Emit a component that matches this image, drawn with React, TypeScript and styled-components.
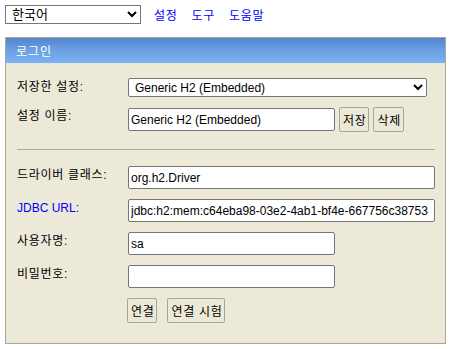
import React from 'react';
import styled, { createGlobalStyle } from 'styled-components';

const GlobalStyle = createGlobalStyle`
    body {
        margin: 0;
        background: #ffffff;
        font-family: "Liberation Sans", Arial, "Noto Sans CJK KR", sans-serif;
        font-size: 12px;
        color: #000000;
    }
`;

const Page = styled.div`
    padding: 5px;
`;

const TopBar = styled.div`
    display: flex;
    align-items: center;
    height: 19px;
`;

const LanguageSelect = styled.select`
    width: 136px;
    height: 19px;
    font-family: "Liberation Sans", Arial, "Noto Sans CJK KR", sans-serif;
    font-size: 13px;
    border: 1px solid #767676;
    border-radius: 0;
    background: #ffffff;
    padding: 0 2px;
    margin: 0 -1px 0 0;
`;

const NavLink = styled.a`
    color: #0000ff;
    text-decoration: none;
    font-size: 12px;
    letter-spacing: 0.7px;
    margin-left: 14px;
    cursor: pointer;
`;

const Panel = styled.div`
    margin-top: 13px;
    width: 439px;
    border: 1px solid #aca899;
    background: #ece9d8;
`;

const PanelHeader = styled.div`
    height: 25px;
    display: flex;
    align-items: center;
    padding-left: 10px;
    color: #ffffff;
    font-size: 12px;
    letter-spacing: 1px;
    background: linear-gradient(to bottom, #5284cc 0%, #6a9fe2 45%, #7ab2f2 100%);
`;

const FormBody = styled.div`
    padding: 15px 10px 20px 11px;
`;

const FormGrid = styled.div`
    display: grid;
    grid-template-columns: 111px 1fr;
    row-gap: 10px;
    align-items: start;
`;

const Label = styled.div<{ $link?: boolean }>`
    padding-top: 2px;
    line-height: 14px;
    letter-spacing: ${props => (props.$link ? '0' : '0.7px')};
    color: ${props => (props.$link ? '#0000ff' : '#000000')};
    white-space: nowrap;
`;

const Field = styled.div`
    display: flex;
    align-items: center;
    gap: 4px;
`;

const SettingSelect = styled.select`
    width: 299px;
    height: 19px;
    font-family: "Liberation Sans", Arial, "Noto Sans CJK KR", sans-serif;
    font-size: 12px;
    border: 1px solid #767676;
    border-radius: 2px;
    background: #ffffff;
    padding: 0 2px;
    margin: 0;
`;

const TextInput = styled.input<{ $wide?: boolean }>`
    box-sizing: border-box;
    width: ${props => (props.$wide ? '307px' : '207px')};
    height: 23px;
    margin: 0;
    padding: 1px 2px;
    border: 1px solid #767676;
    border-radius: 2px;
    background: #ffffff;
    font-family: "Liberation Sans", Arial, "Noto Sans CJK KR", sans-serif;
    font-size: 12px;
    color: #000000;
`;

const Divider = styled.div`
    border-top: 1px solid #aca899;
    margin: 17px 0 16px 0;
`;

const Button = styled.button`
    height: 25px;
    padding: 0 2px 0 3px;
    margin: 0;
    border: 1px solid #a8a595;
    border-radius: 2px;
    background: #ece9d8;
    font-family: "Liberation Sans", Arial, "Noto Sans CJK KR", sans-serif;
    font-size: 12px;
    letter-spacing: 0.7px;
    color: #000000;
    cursor: pointer;
`;

const ButtonRow = styled.div`
    display: flex;
    gap: 10px;
    margin-left: -1px;
`;

const App: React.FC = () => {
    return (
        <Page>
            <GlobalStyle />
            <TopBar>
                <LanguageSelect defaultValue="ko">
                    <option value="ko">한국어</option>
                </LanguageSelect>
                <NavLink>설정</NavLink>
                <NavLink>도구</NavLink>
                <NavLink>도움말</NavLink>
            </TopBar>

            <Panel>
                <PanelHeader>로그인</PanelHeader>
                <FormBody>
                    <FormGrid>
                        <Label>저장한 설정:</Label>
                        <Field>
                            <SettingSelect defaultValue="h2">
                                <option value="h2">Generic H2 (Embedded)</option>
                            </SettingSelect>
                        </Field>

                        <Label>설정 이름:</Label>
                        <Field>
                            <TextInput defaultValue="Generic H2 (Embedded)" />
                            <Button>저장</Button>
                            <Button>삭제</Button>
                        </Field>
                    </FormGrid>

                    <Divider />

                    <FormGrid>
                        <Label>드라이버 클래스:</Label>
                        <Field>
                            <TextInput $wide defaultValue="org.h2.Driver" />
                        </Field>

                        <Label $link>JDBC URL:</Label>
                        <Field>
                            <TextInput $wide defaultValue="jdbc:h2:mem:c64eba98-03e2-4ab1-bf4e-667756c38753" />
                        </Field>

                        <Label>사용자명:</Label>
                        <Field>
                            <TextInput defaultValue="sa" />
                        </Field>

                        <Label>비밀번호:</Label>
                        <Field>
                            <TextInput type="password" />
                        </Field>

                        <div />
                        <ButtonRow>
                            <Button>연결</Button>
                            <Button>연결 시험</Button>
                        </ButtonRow>
                    </FormGrid>
                </FormBody>
            </Panel>
        </Page>
    );
};

export default App;
